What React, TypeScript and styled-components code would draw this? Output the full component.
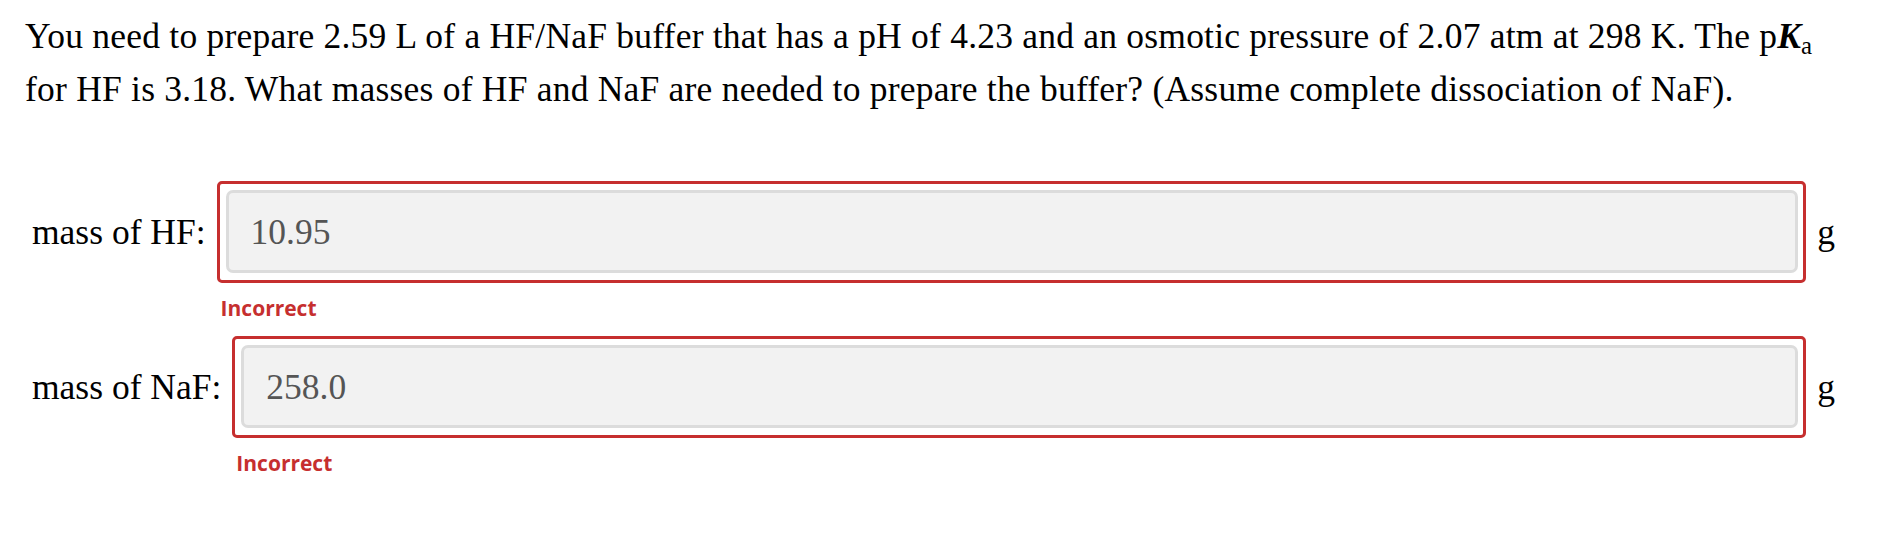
import React from "react";
import styled, { createGlobalStyle } from "styled-components";

const GlobalStyle = createGlobalStyle`
  body {
    margin: 0;
    background: #fff;
  }
`;

const Page = styled.div`
  padding: 10px 43px 20px 25px;
  font-family: "Liberation Serif", "Times New Roman", serif;
  color: #000;
`;

const Question = styled.p`
  margin: 0 0 66px;
  font-size: 35.5px;
  line-height: 52.5px;
  letter-spacing: 0.22px;
`;

const Sub = styled.sub`
  font-size: 0.7em;
  line-height: 0;
  vertical-align: -0.25em;
`;

const Var = styled.i`
  font-weight: 700;
`;

const Form = styled.div`
  display: flex;
  flex-direction: column;
  gap: 13px;
`;

const FieldRow = styled.div`
  display: grid;
  grid-template-columns: auto 1fr auto;
  column-gap: 11px;
  align-items: center;
`;

const Label = styled.label`
  padding-left: 7px;
  font-size: 35.5px;
`;

const AnswerBox = styled.div<{ $wrong: boolean }>`
  border: 3px solid ${(p) => (p.$wrong ? "#c62f2f" : "transparent")};
  border-radius: 5px;
  padding: 6px 5px 7px 6px;
`;

const Input = styled.input`
  display: block;
  box-sizing: border-box;
  width: 100%;
  height: 83px;
  padding: 0 22px;
  border: 3px solid #dcdcdc;
  border-radius: 7px;
  background: #f2f2f2;
  font-family: "Liberation Serif", "Times New Roman", serif;
  font-size: 35.5px;
  color: #555;
  outline: none;
`;

const Unit = styled.span`
  font-size: 35.5px;
`;

const Feedback = styled.div`
  grid-column: 2;
  margin-top: 11px;
  padding-left: 4px;
  font-family: "Open Sans", "Liberation Sans", sans-serif;
  font-weight: 700;
  font-size: 21px;
  line-height: 29px;
  color: #c62f2f;
`;

const fields = [
  { label: "mass of HF:", value: "10.95", unit: "g" },
  { label: "mass of NaF:", value: "258.0", unit: "g" },
];

export default function App() {
  return (
    <Page>
      <GlobalStyle />
      <Question>
        You need to prepare 2.59 L of a HF/NaF buffer that has a pH of 4.23 and an osmotic
        pressure of 2.07 atm at 298 K. The p<Var>K</Var>
        <Sub>a</Sub> for HF is 3.18. What masses of HF and NaF are needed to prepare the
        buffer? (Assume complete dissociation of NaF).
      </Question>
      <Form>
        {fields.map((f) => (
          <FieldRow key={f.label}>
            <Label>{f.label}</Label>
            <AnswerBox $wrong>
              <Input readOnly value={f.value} />
            </AnswerBox>
            <Unit>{f.unit}</Unit>
            <Feedback>Incorrect</Feedback>
          </FieldRow>
        ))}
      </Form>
    </Page>
  );
}
